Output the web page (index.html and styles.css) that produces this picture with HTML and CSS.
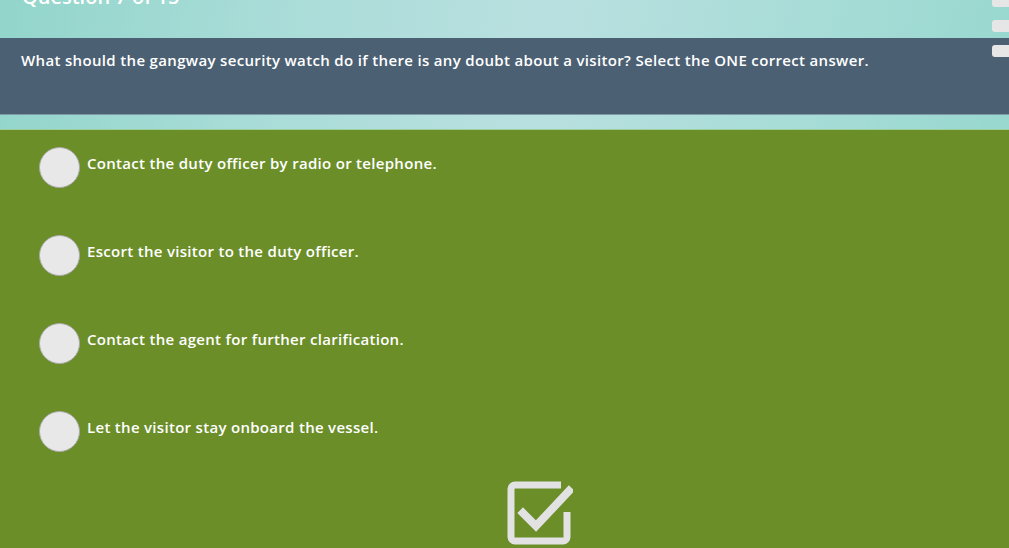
FILE: index.html
```html
<!DOCTYPE html>
<html>
<head>
<meta charset="utf-8">
<link rel="stylesheet" href="styles.css">
</head>
<body>
<div class="page">
  <header class="top">
    <div class="counter">Question 7 of 15</div>
  </header>
  <section class="question">
    <p class="qtext">What should the gangway security watch do if there is any doubt about a visitor? Select the ONE correct answer.</p>
  </section>
  <div class="strip"></div>
  <main class="answers">
    <div class="option"><span class="radio"></span><span class="label">Contact the duty officer by radio or telephone.</span></div>
    <div class="option"><span class="radio"></span><span class="label">Escort the visitor to the duty officer.</span></div>
    <div class="option"><span class="radio"></span><span class="label">Contact the agent for further clarification.</span></div>
    <div class="option"><span class="radio"></span><span class="label">Let the visitor stay onboard the vessel.</span></div>
    <div class="submit">
      <svg width="66" height="66" viewBox="0 0 66 66">
        <path d="M54 5 H8 A4 4 0 0 0 4 9 V57 A4 4 0 0 0 8 61 H56 A4 4 0 0 0 60 57 V32" fill="none" stroke="#e2e2e2" stroke-width="7" stroke-linejoin="round"/>
        <path d="M16 33 L29 46 L62 11" fill="none" stroke="#e2e2e2" stroke-width="8" stroke-linecap="square" stroke-linejoin="miter"/>
      </svg>
    </div>
  </main>
  <div class="tabs">
    <span class="tab"></span>
    <span class="tab"></span>
    <span class="tab"></span>
  </div>
</div>
</body>
</html>
```
FILE: styles.css
```css
* { box-sizing: border-box; }
html, body { margin: 0; padding: 0; height: 100%; overflow: hidden; }
body {
  font-family: "Open Sans", "Liberation Sans", sans-serif;
  background: #6b8e29;
}
.page {
  position: relative;
  width: 1009px;
  height: 548px;
  overflow: hidden;
  background: linear-gradient(100deg, #92d5cb 0%, #a9dcd8 25%, #b9e0e0 50%, #a7dcd7 75%, #92d6cc 100%);
}
.top {
  display: flow-root;
  height: 38px;
  padding-left: 22px;
}
.counter {
  color: #ffffff;
  font-size: 20px;
  font-weight: 600;
  line-height: 20px;
  margin-top: -13px;
}
.question {
  height: 77px;
  background: #4b6073;
  border-bottom: 1px solid #7f9aa6;
  padding: 12px 0 0 21px;
}
.qtext {
  margin: 0;
  color: #ffffff;
  font-size: 15px;
  font-weight: 600;
  letter-spacing: 0.34px;
  line-height: 20px;
}
.strip {
  height: 15px;
  border-bottom: 1px solid #9ccf9a;
}
.answers {
  background: #6b8e29;
  height: 418px;
  padding: 17px 0 0 39px;
  display: flex;
  flex-direction: column;
}
.option {
  display: flex;
  align-items: center;
  gap: 7px;
  height: 41px;
  margin-bottom: 47px;
}
.radio {
  width: 41px;
  height: 41px;
  border-radius: 50%;
  background: #e8e8e8;
  border: 1px solid #a9a9a9;
  flex: none;
}
.label {
  color: #ffffff;
  font-size: 15px;
  font-weight: 600;
  letter-spacing: 0.3px;
  margin-bottom: 9px;
}
.submit {
  margin-top: -19px;
  padding-left: 468px;
}
.submit svg { display: block; }
.tabs {
  position: absolute;
  right: -4px;
  top: -5px;
  display: flex;
  flex-direction: column;
  gap: 13px;
}
.tab {
  display: block;
  width: 21px;
  height: 12px;
  background: #e6e6e6;
  border-radius: 3px;
}
```
